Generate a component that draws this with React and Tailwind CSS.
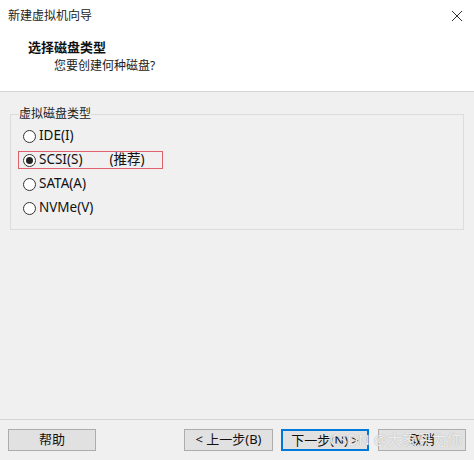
import React, { useState } from "react";

const font = { fontFamily: '"Segoe UI", "Noto Sans", "Noto Sans CJK SC", sans-serif' };

function Radio({ checked, label, extra, onClick, highlight }) {
  return (
    <div
      onClick={onClick}
      className={
        "flex items-center h-[18px] w-[145px] -ml-[1px] border " +
        (highlight ? "border-[#e0606e]" : "border-transparent")
      }
    >
      <span className="ml-[4px] w-[13px] h-[13px] rounded-full border border-[#333] bg-white flex items-center justify-center">
        {checked && <span className="w-[7px] h-[7px] rounded-full bg-[#222]" />}
      </span>
      <span className="ml-[3px] text-[13.5px] text-[#111] leading-none">{label}</span>
      {extra && <span className="ml-[27px] text-[13.5px] text-[#111] leading-none">{extra}</span>}
    </div>
  );
}

export default function App() {
  const [disk, setDisk] = useState("scsi");

  return (
    <div className="w-[474px] h-[460px] bg-[#f0f0f0] flex flex-col overflow-hidden relative" style={font}>
      {/* header */}
      <div className="h-[92px] bg-white border-b border-[#d5d5d5] flex flex-col">
        <div className="h-[32px] flex items-center justify-between pl-[8px] pr-[10px]">
          <span className="text-[12px] text-[#222]">新建虚拟机向导</span>
          <svg width="12" height="12" viewBox="0 0 12 12" className="mr-[1px]">
            <path d="M1 1L11 11M11 1L1 11" stroke="#333" strokeWidth="1" />
          </svg>
        </div>
        <div className="pl-[28px] mt-[6px] text-[13px] font-bold text-[#111] leading-[18px]">选择磁盘类型</div>
        <div className="pl-[54px] mt-[1px] text-[12px] text-[#222] leading-[18px]">您要创建何种磁盘?</div>
      </div>

      {/* body */}
      <div className="flex-1 px-[10px] pt-[14px]">
        <fieldset className="border border-[#dcdcdc] h-[124px] pl-[8px] pt-[5px]">
          <legend className="text-[12px] text-[#222] leading-[16px]">虚拟磁盘类型</legend>
          <div className="flex flex-col gap-[6px]">
            <Radio label="IDE(I)" checked={disk === "ide"} onClick={() => setDisk("ide")} />
            <Radio label="SCSI(S)" extra="(推荐)" highlight checked={disk === "scsi"} onClick={() => setDisk("scsi")} />
            <Radio label="SATA(A)" checked={disk === "sata"} onClick={() => setDisk("sata")} />
            <Radio label="NVMe(V)" checked={disk === "nvme"} onClick={() => setDisk("nvme")} />
          </div>
        </fieldset>
      </div>

      {/* footer */}
      <div className="h-[41px] border-t border-[#d5d5d5] flex items-start pt-[9px] px-[8px] text-[13px] text-[#111]">
        <button className="w-[88px] h-[22px] bg-[#e1e1e1] border border-[#adadad]">帮助</button>
        <div className="flex-1" />
        <button className="w-[89px] h-[22px] bg-[#e1e1e1] border border-[#adadad]">&lt; 上一步(B)</button>
        <button className="ml-[8px] w-[88px] h-[22px] bg-[#e1e1e1] border-2 border-[#0078d7]">下一步(N) &gt;</button>
        <button className="ml-[9px] w-[88px] h-[22px] bg-[#e1e1e1] border border-[#adadad]">取消</button>
      </div>

      {/* watermark */}
      <div className="absolute right-[12px] bottom-[10px] text-[15px] text-white/80 pointer-events-none" style={{ textShadow: "0 0 1px #999" }}>
        CSDN @大象只为你
      </div>
    </div>
  );
}
